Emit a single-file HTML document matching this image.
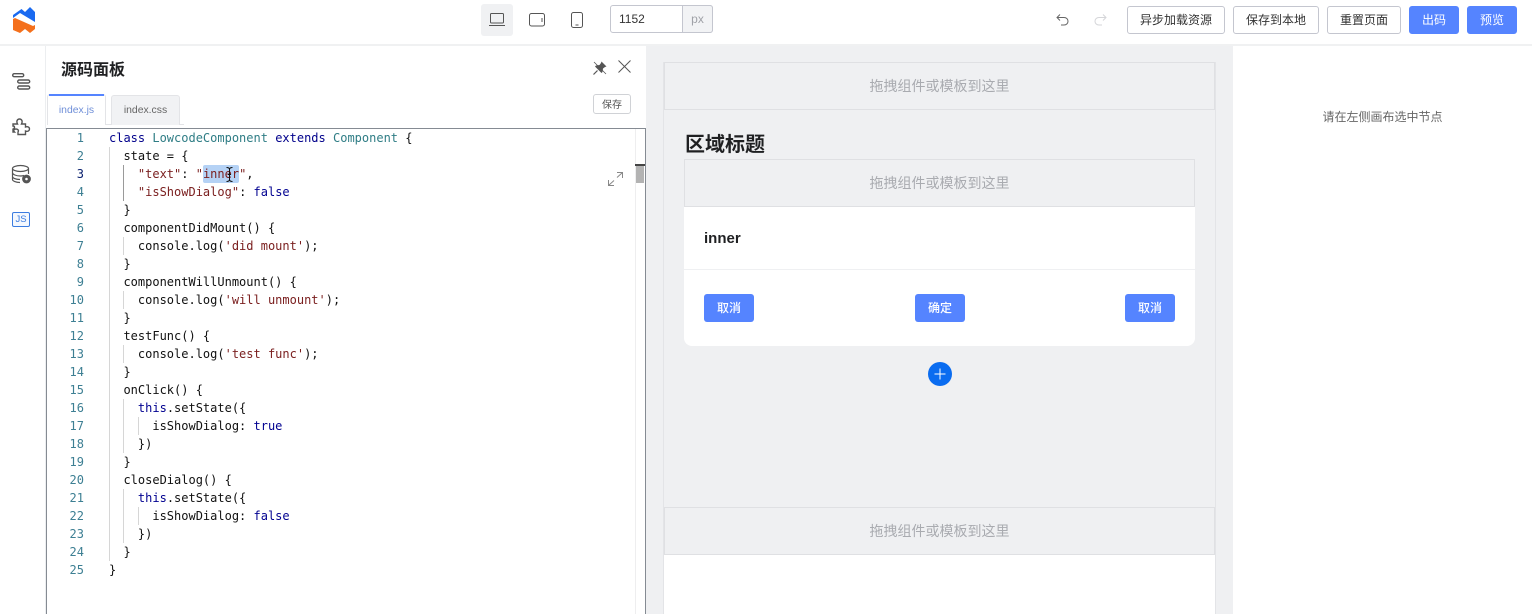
<!DOCTYPE html>
<html lang="zh"><head><meta charset="utf-8"><title>源码面板</title>
<style>
*{box-sizing:border-box}
html,body{margin:0;padding:0;width:1532px;height:614px;overflow:hidden;background:#fff;font-family:"Liberation Sans","Noto Sans CJK SC",sans-serif;color:#333}
.a{position:absolute}
.btn{position:absolute;top:6px;height:28px;border:1px solid #c4c6cf;border-radius:3px;background:#fff;color:#333;font-size:12px;line-height:26px;text-align:center}
.pri{background:#5584ff;border-color:#5584ff;color:#fff}
.drop{position:absolute;background:#eff0f2;border:1px solid #dfe0e3;color:#a9abb0;font-size:14px;text-align:center;height:48px;line-height:46px}
.ln{position:absolute;left:47px;width:37px;text-align:right;font:12px/18px "DejaVu Sans Mono",monospace;color:#3d7f93}
.l{position:absolute;left:109px;height:18px;font:12px/18px "DejaVu Sans Mono",monospace;color:#111;white-space:pre}
.k{color:#00008b}.t{color:#2f7d85}.s{color:#7b2020}.b{color:#000090}
.g{position:absolute;width:1px;background:#d6d6d6}
.mbtn{position:absolute;width:50px;height:28px;top:294px;background:#5584ff;border-radius:3px;color:#fff;font-size:12px;font-weight:500;line-height:28px;text-align:center}
svg{position:absolute;overflow:visible}
</style></head><body>

<!-- top bar -->
<div class="a" style="left:0;top:44px;width:1532px;height:2px;background:#f0f1f2"></div>
<svg style="left:12px;top:7px" width="24" height="26" viewBox="0 0 24 26">
<path d="M1 8 L9.500 2 L13 5 L18 0 L23 5 V15 L8 6 L1 11Z" fill="#1a6af0"/>
<path d="M1 12 L3 11 L21 19 L23 18 V22 L18 26 L13 22 L8 26 L1 23Z" fill="#f4701c"/>
</svg>
<div class="a" style="left:481px;top:4px;width:32px;height:32px;background:#f0f1f3;border-radius:3px"></div>
<svg style="left:489px;top:13px" width="16" height="13" fill="none" stroke="#555" stroke-width="1"><rect x="1.500" y=".5" width="13" height="9.500" rx="1"/><path d="M0 12.500H16"/></svg>
<svg style="left:529px;top:13px" width="16" height="14" fill="none" stroke="#555" stroke-width="1"><rect x=".5" y=".5" width="15" height="12.500" rx="2"/><path d="M13 5V9"/></svg>
<svg style="left:571px;top:12px" width="12" height="16" fill="none" stroke="#555" stroke-width="1"><rect x=".5" y=".5" width="11" height="15" rx="2"/><path d="M4.500 13H7.500"/></svg>
<div class="a" style="left:610px;top:5px;width:103px;height:28px;border:1px solid #c4c6cf;border-radius:3px;font-size:12px;line-height:26px;padding-left:8px;color:#333">1152</div>
<div class="a" style="left:682px;top:5px;width:31px;height:28px;border:1px solid #c4c6cf;border-radius:0 3px 3px 0;background:#f2f3f5;font-size:12px;line-height:26px;text-align:center;color:#a0a2a8">px</div>
<svg style="left:1056px;top:14px" width="13" height="12" fill="none" stroke="#666" stroke-width="1"><path d="M4 .5L1 3.500L4 6.500M1 3.500H8C10.500 3.500 12 5.200 12 7.200S10.500 11 8 11H5"/></svg>
<svg style="left:1094px;top:14px" width="13" height="12" fill="none" stroke="#d5d6d9" stroke-width="1"><path d="M9 .5L12 3.500L9 6.500M12 3.500H5C2.500 3.500 1 5.200 1 7.200S2.500 11 5 11H8"/></svg>
<div class="btn" style="left:1127px;width:98px">异步加载资源</div>
<div class="btn" style="left:1233px;width:86px">保存到本地</div>
<div class="btn" style="left:1327px;width:74px">重置页面</div>
<div class="btn pri" style="left:1409px;width:50px">出码</div>
<div class="btn pri" style="left:1467px;width:50px">预览</div>

<!-- left rail -->
<div class="a" style="left:45px;top:46px;width:1px;height:568px;background:#eceef0"></div>
<svg style="left:12px;top:73px" width="18" height="17" fill="none" stroke="#555" stroke-width="1.400"><rect x=".7" y=".7" width="11" height="3" rx="1.500"/><rect x="5.700" y="7" width="12" height="3" rx="1.500"/><rect x="5.700" y="13" width="12" height="3" rx="1.500"/></svg>
<svg style="left:12px;top:118px" width="18" height="18" fill="none" stroke="#555" stroke-width="1.400"><path d="M1 6H5.500C4 3 5.500 1 7.500 1S11 3 9.500 6H13.500V9C16 8 17.500 9.500 17.500 11S16 14 13.500 13V16.500H6V14C7 12.500 6 11 4 11S1 12.500 2.500 14H1V11C3 10.500 3 8 1 8Z"/></svg>
<svg style="left:12px;top:165px" width="19" height="19" fill="none" stroke="#555" stroke-width="1.200"><ellipse cx="8.500" cy="3.500" rx="8" ry="3"/><path d="M.5 3.500V14.500C.5 16 4 17.500 8 17.500M.5 7.500C.5 9.500 4 11 8.500 11C10 11 11 10.800 12 10.500M.5 11.500C.5 13 3.500 14.500 8 14.500M16.500 3.500V9"/><circle cx="14.500" cy="14" r="3.800" fill="#555" stroke="#555"/><circle cx="14.500" cy="14" r="1.300" fill="#fff" stroke="none"/></svg>
<div class="a" style="left:12px;top:212px;width:18px;height:15px;border:1.500px solid #3b7ce0;border-radius:2px;color:#3b7ce0;font-size:9.500px;line-height:13px;text-align:center;background:#f4f8fe">JS</div>

<!-- source panel -->
<div class="a" style="left:61px;top:60px;font-size:16px;line-height:21px;font-weight:bold;color:#1f2022">源码面板</div>
<svg style="left:593px;top:61px" width="14" height="14"><path d="M8.500 .5L13.500 5.500L12 6L10 7.500L9.500 11L8.500 12L2 5.500L3 4.500L6.500 4L8 2Z" fill="#555"/><path d="M4.500 9.500L.5 13.500" stroke="#555" stroke-width="1.200"/><path d="M1 1L13 13" stroke="#555" stroke-width=".8"/></svg>
<svg style="left:618px;top:60px" width="13" height="13" fill="none" stroke="#555" stroke-width="1"><path d="M.5 .5L12.500 12.500M12.500 .5L.5 12.500"/></svg>
<div class="a" style="left:48px;top:124px;width:136px;height:1px;background:#e3e4e7"></div>
<div class="a" style="left:47px;top:94px;width:59px;height:31px;background:#fff;border:1px solid #e3e4e7;border-bottom:none;border-radius:3px 3px 0 0;font-size:10.400px;line-height:31px;text-align:center;color:#6f8fd8">index.js</div>
<div class="a" style="left:49px;top:94px;width:55px;height:2px;background:#5584ff"></div>
<div class="a" style="left:111px;top:95px;width:69px;height:30px;background:#f1f2f4;border:1px solid #e3e4e7;border-bottom:none;border-radius:3px 3px 0 0;font-size:10.400px;line-height:29px;text-align:center;color:#666">index.css</div>
<div class="a" style="left:593px;top:94px;width:38px;height:20px;border:1px solid #d0d2d6;border-radius:3px;font-size:10px;line-height:21px;text-align:center;color:#555">保存</div>

<!-- editor -->
<div class="a" style="left:46px;top:128px;width:600px;height:486px;border:1px solid #858b93;border-bottom:none;background:#fff"></div>
<div class="a" style="left:635px;top:129px;width:1px;height:485px;background:#eeeeef"></div>
<div class="a" style="left:635px;top:164px;width:10px;height:2px;background:#444"></div>
<div class="a" style="left:636px;top:166px;width:8px;height:17px;background:#b3b3b3"></div>
<div class="a" style="left:203px;top:165px;width:36px;height:18px;background:#b5d2f5;border-radius:2px"></div>

<div class="g" style="left:109px;top:147px;height:414px"></div>
<div class="g" style="left:123px;top:165px;height:36px;background:#9a9a9a"></div>
<div class="g" style="left:123px;top:237px;height:18px"></div>
<div class="g" style="left:123px;top:291px;height:18px"></div>
<div class="g" style="left:123px;top:345px;height:18px"></div>
<div class="g" style="left:123px;top:399px;height:54px"></div>
<div class="g" style="left:123px;top:489px;height:54px"></div>
<div class="g" style="left:138px;top:417px;height:18px"></div>
<div class="g" style="left:138px;top:507px;height:18px"></div>

<div class="ln" style="top:129px">1</div><div class="ln" style="top:147px">2</div><div class="ln" style="top:165px;color:#0b216f">3</div><div class="ln" style="top:183px">4</div><div class="ln" style="top:201px">5</div><div class="ln" style="top:219px">6</div><div class="ln" style="top:237px">7</div><div class="ln" style="top:255px">8</div><div class="ln" style="top:273px">9</div><div class="ln" style="top:291px">10</div><div class="ln" style="top:309px">11</div><div class="ln" style="top:327px">12</div><div class="ln" style="top:345px">13</div><div class="ln" style="top:363px">14</div><div class="ln" style="top:381px">15</div><div class="ln" style="top:399px">16</div><div class="ln" style="top:417px">17</div><div class="ln" style="top:435px">18</div><div class="ln" style="top:453px">19</div><div class="ln" style="top:471px">20</div><div class="ln" style="top:489px">21</div><div class="ln" style="top:507px">22</div><div class="ln" style="top:525px">23</div><div class="ln" style="top:543px">24</div><div class="ln" style="top:561px">25</div>

<div class="l" style="top:129px"><span class="k">class</span> <span class="t">LowcodeComponent</span> <span class="k">extends</span> <span class="t">Component</span> {</div>
<div class="l" style="top:147px">  state = {</div>
<div class="l" style="top:165px">    <span class="s">"text"</span>: <span class="s">"inner"</span>,</div>
<div class="l" style="top:183px">    <span class="s">"isShowDialog"</span>: <span class="b">false</span></div>
<div class="l" style="top:201px">  }</div>
<div class="l" style="top:219px">  componentDidMount() {</div>
<div class="l" style="top:237px">    console.log(<span class="s">'did mount'</span>);</div>
<div class="l" style="top:255px">  }</div>
<div class="l" style="top:273px">  componentWillUnmount() {</div>
<div class="l" style="top:291px">    console.log(<span class="s">'will unmount'</span>);</div>
<div class="l" style="top:309px">  }</div>
<div class="l" style="top:327px">  testFunc() {</div>
<div class="l" style="top:345px">    console.log(<span class="s">'test func'</span>);</div>
<div class="l" style="top:363px">  }</div>
<div class="l" style="top:381px">  onClick() {</div>
<div class="l" style="top:399px">    <span class="b">this</span>.setState({</div>
<div class="l" style="top:417px">      isShowDialog: <span class="b">true</span></div>
<div class="l" style="top:435px">    })</div>
<div class="l" style="top:453px">  }</div>
<div class="l" style="top:471px">  closeDialog() {</div>
<div class="l" style="top:489px">    <span class="b">this</span>.setState({</div>
<div class="l" style="top:507px">      isShowDialog: <span class="b">false</span></div>
<div class="l" style="top:525px">    })</div>
<div class="l" style="top:543px">  }</div>
<div class="l" style="top:561px">}</div>

<!-- I-beam cursor -->
<svg style="left:226px;top:167px" width="7" height="15" fill="none" stroke="#111" stroke-width="1"><path d="M.5 .5C2 .5 3.500 1 3.500 2.500V12.500C3.500 14 2 14.500 .5 14.500M6.500 .5C5 .5 3.500 1 3.500 2.500M3.500 12.500C3.500 14 5 14.500 6.500 14.500M2 7.500H5"/></svg>
<!-- expand icon -->
<svg style="left:608px;top:172px" width="15" height="14" fill="none" stroke="#888" stroke-width="1"><path d="M9 .5H14.500V6M14.500 .5L9 5.500M6 8.500L.5 13.500M.5 8V13.500H6"/></svg>

<!-- canvas -->
<div class="a" style="left:646px;top:46px;width:587px;height:568px;background:#eff0f2"></div>
<div class="a" style="left:663px;top:62px;width:553px;height:552px;border-left:1px solid #e3e4e7;border-right:1px solid #e3e4e7"></div>
<div class="drop" style="left:664px;top:62px;width:551px">拖拽组件或模板到这里</div>
<div class="a" style="left:685px;top:133px;font-size:20px;line-height:24px;font-weight:bold;color:#1f2022">区域标题</div>
<div class="drop" style="left:684px;top:159px;width:511px">拖拽组件或模板到这里</div>
<div class="a" style="left:684px;top:207px;width:511px;height:139px;background:#fff;border-radius:0 0 8px 8px"></div>
<div class="a" style="left:684px;top:269px;width:511px;height:1px;background:#eff0f2"></div>
<div class="a" style="left:704px;top:229px;font-size:15px;line-height:20px;font-weight:bold;color:#1f2022">inner</div>
<div class="mbtn" style="left:704px">取消</div>
<div class="mbtn" style="left:915px">确定</div>
<div class="mbtn" style="left:1125px">取消</div>
<div class="a" style="left:928px;top:362px;width:24px;height:24px;border-radius:50%;background:#0a6cf0"></div>
<svg style="left:934px;top:368px" width="12" height="12" stroke="#fff" stroke-width="1"><path d="M6 .5V11.500M.5 6H11.500"/></svg>
<div class="a" style="left:664px;top:555px;width:551px;height:59px;background:#fff"></div>
<div class="drop" style="left:664px;top:507px;width:551px">拖拽组件或模板到这里</div>

<!-- right panel -->
<div class="a" style="left:1233px;top:46px;width:299px;height:568px;background:#fff"></div>
<div class="a" style="left:1233px;top:109px;width:299px;text-align:center;font-size:12px;line-height:17px;color:#666">请在左侧画布选中节点</div>
</body></html>
